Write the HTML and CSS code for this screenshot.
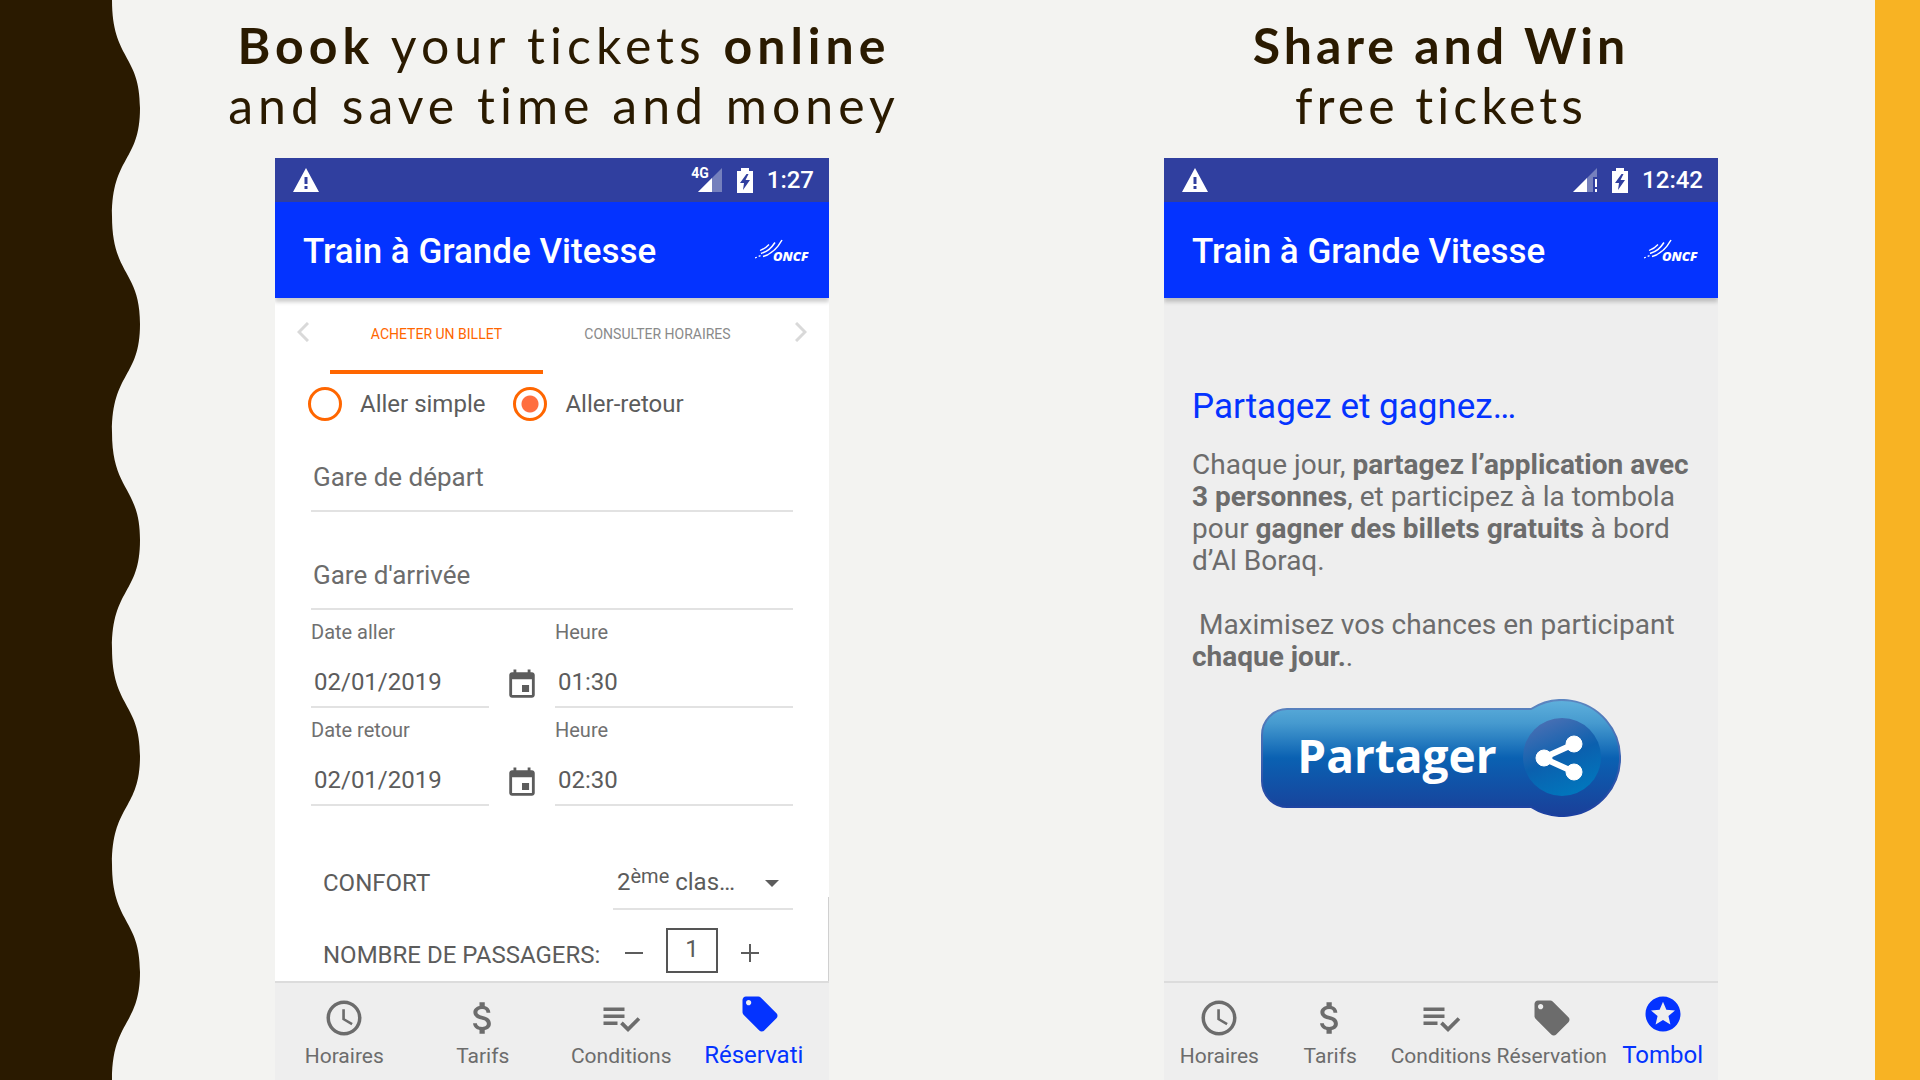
FILE: index.html
```html
<!DOCTYPE html>
<html lang="en">
<head>
    <meta charset="UTF-8">
    <meta name="viewport" content="width=device-width, initial-scale=1.0">
    <title>Train à Grande Vitesse</title>
    <link rel="stylesheet" href="styles.css">
</head>
<body>
    <!-- Shared icons -->
    <svg class="sprite" aria-hidden="true">
        <symbol id="warning" viewBox="0 0 26 24"><path fill="#fff" fill-rule="evenodd" d="M13 0L26 24H0zM11.500 9v7h3V9zM11.500 18v3h3v-3z"/></symbol>
        <symbol id="battery" viewBox="0 0 16 25"><path fill="#fff" fill-rule="evenodd" d="M4 0h8v3h4v22H0V3h4zM9.500 6L3 15h4l-1 7 7-10H8.500l3-6z"/></symbol>
        <symbol id="clock" viewBox="0 0 24 24"><path d="M11.990 2C6.470 2 2 6.480 2 12s4.470 10 9.990 10C17.520 22 22 17.520 22 12S17.520 2 11.990 2zM12 20a8 8 0 1 1 0-16 8 8 0 0 1 0 16zM12.500 7H11v6l5.250 3.150.750-1.230-4.500-2.670z"/></symbol>
        <symbol id="dollar" viewBox="0 0 24 24"><path d="M11.800 10.900c-2.270-.590-3-1.200-3-2.150 0-1.090 1.010-1.850 2.700-1.850 1.780 0 2.440.850 2.500 2.100h2.210c-.070-1.720-1.120-3.300-3.210-3.810V3h-3v2.160c-1.940.420-3.500 1.680-3.500 3.610 0 2.310 1.910 3.460 4.700 4.130 2.500.600 3 1.480 3 2.410 0 .690-.490 1.790-2.700 1.790-2.060 0-2.870-.920-2.980-2.100h-2.200c.120 2.190 1.760 3.420 3.680 3.830V21h3v-2.150c1.950-.370 3.500-1.500 3.500-3.550 0-2.840-2.430-3.810-4.700-4.400z"/></symbol>
        <symbol id="list" viewBox="0 0 24 24"><path d="M14 6H2v2h12zM14 10H2v2h12zM2 16h8v-2H2zM21.500 11.500L23 13l-6.990 7-4.510-4.500L13 14l3.010 3z"/></symbol>
        <symbol id="tag" viewBox="0 0 24 24"><path d="M21.410 11.580l-9-9C12.050 2.220 11.550 2 11 2H4c-1.100 0-2 .900-2 2v7c0 .550.220 1.050.590 1.420l9 9c.360.360.860.580 1.410.580s1.050-.220 1.410-.590l7-7c.370-.360.590-.860.590-1.410s-.230-1.060-.590-1.420zM5.500 7C4.670 7 4 6.330 4 5.500S4.670 4 5.500 4 7 4.670 7 5.500 6.330 7 5.500 7z"/></symbol>
        <symbol id="star" viewBox="0 0 24 24"><path d="M11.990 2C6.470 2 2 6.480 2 12s4.470 10 9.990 10C17.520 22 22 17.520 22 12S17.520 2 11.990 2zm4.240 16L12 15.450 7.770 18l1.120-4.810-3.730-3.230 4.920-.420L12 5l1.920 4.530 4.920.420-3.730 3.230L16.230 18z"/></symbol>
        <symbol id="event" viewBox="0 0 24 24"><path d="M17 12h-5v5h5v-5zM16 1v2H8V1H6v2H5c-1.110 0-1.990.900-1.990 2L3 19c0 1.100.890 2 2 2h14c1.100 0 2-.900 2-2V5c0-1.100-.900-2-2-2h-1V1h-2zm3 18H5V8h14v11z"/></symbol>
        <symbol id="oncf" viewBox="0 0 54 24">
            <g fill="none" stroke="#fff">
                <path stroke-width="1.500" d="M27 1C22 10 17 15 8 17.500"/>
                <path stroke-width="1.500" d="M20 3.500C16 9.500 13 12 6 14.500"/>
                <path stroke-width="1.300" d="M14 5.500C11 9 9 10 5 11.500"/>
                <path stroke-width="1.200" stroke-dasharray="2 2" d="M0 19l7-3"/>
            </g>
            <text x="18" y="22" fill="#fff" font-family="Open Sans, sans-serif" font-size="13" font-weight="800" font-style="italic">ONCF</text>
        </symbol>
    </svg>

    <svg class="wave" viewBox="0 0 140 1080" preserveAspectRatio="none" aria-hidden="true">
        <path fill="#2a1a00" d="M0 0H112C112 60 140 54 140 108S112 156 112 216 140 270 140 324 112 372 112 432 140 486 140 540 112 588 112 648 140 702 140 756 112 804 112 864 140 918 140 972 112 1020 112 1080H0z"/>
    </svg>

    <main class="slide">
        <section class="panel panel-book">
            <h1 class="headline"><b>Book</b> your tickets <b>online</b><br>and save time and money</h1>

            <div class="phone phone-white">
                <div class="status">
                    <svg class="icon-warning"><use href="#warning"/></svg>
                    <span class="network">4G</span>
                    <svg class="icon-signal" viewBox="0 0 24 24"><path fill="#7580bd" d="M24 0v24H0z"/><path fill="#fff" d="M14 10v14H0z"/></svg>
                    <svg class="icon-battery"><use href="#battery"/></svg>
                    <span class="time">1:27</span>
                </div>
                <header class="appbar">
                    <h2>Train à Grande Vitesse</h2>
                    <svg class="logo"><use href="#oncf"/></svg>
                </header>

                <div class="tabs">
                    <button class="arrow" aria-label="Précédent"><svg viewBox="0 0 12 20"><path d="M11 1L2 10l9 9"/></svg></button>
                    <button class="tab tab-active">ACHETER UN BILLET</button>
                    <button class="tab">CONSULTER HORAIRES</button>
                    <button class="arrow" aria-label="Suivant"><svg viewBox="0 0 12 20"><path d="M1 1l9 9-9 9"/></svg></button>
                </div>

                <form class="booking">
                    <div class="trip">
                        <label><input type="radio" name="trip"> Aller simple</label>
                        <label><input type="radio" name="trip" checked> Aller-retour</label>
                    </div>

                    <input class="station" type="text" aria-label="Gare de départ" placeholder="Gare de départ">
                    <input class="station" type="text" aria-label="Gare d'arrivée" placeholder="Gare d'arrivée">

                    <div class="dates">
                        <label for="dateAller">Date aller</label>
                        <label class="hour" for="heureAller">Heure</label>
                        <input type="text" id="dateAller" value="02/01/2019">
                        <button type="button" aria-label="Calendrier"><svg><use href="#event"/></svg></button>
                        <input type="text" id="heureAller" value="01:30">
                    </div>
                    <div class="dates">
                        <label for="dateRetour">Date retour</label>
                        <label class="hour" for="heureRetour">Heure</label>
                        <input type="text" id="dateRetour" value="02/01/2019">
                        <button type="button" aria-label="Calendrier"><svg><use href="#event"/></svg></button>
                        <input type="text" id="heureRetour" value="02:30">
                    </div>

                    <div class="comfort">
                        <label for="confort">CONFORT</label>
                        <div class="select">
                            <select id="confort"><option>2ème classe</option><option>1ère classe</option></select>
                            <span class="select-text" aria-hidden="true">2<sup>ème</sup> clas…</span>
                        </div>
                    </div>

                    <div class="passengers">
                        <label for="passagers">NOMBRE DE PASSAGERS:</label>
                        <button type="button" aria-label="Moins"><svg viewBox="0 0 18 18"><path d="M0 9h18"/></svg></button>
                        <input type="text" id="passagers" value="1">
                        <button type="button" aria-label="Plus"><svg viewBox="0 0 18 18"><path d="M0 9h18M9 0v18"/></svg></button>
                    </div>
                </form>

                <div class="scrollbar"></div>

                <nav class="bottom">
                    <a href="#"><svg><use href="#clock"/></svg><span>Horaires</span></a>
                    <a href="#"><svg><use href="#dollar"/></svg><span>Tarifs</span></a>
                    <a href="#"><svg><use href="#list"/></svg><span>Conditions</span></a>
                    <a class="active" href="#"><svg><use href="#tag"/></svg><span>Réservati</span></a>
                </nav>
            </div>
        </section>

        <section class="panel">
            <h1 class="headline"><b>Share and Win</b><br>free tickets</h1>

            <div class="phone">
                <div class="status">
                    <svg class="icon-warning"><use href="#warning"/></svg>
                    <svg class="icon-signal" viewBox="0 0 24 24"><path fill="#7580bd" d="M24 0v9h-4v15H0z"/><path fill="#fff" d="M14 10v14H0zM22 11h2v8h-2zM22 21h2v3h-2z"/></svg>
                    <svg class="icon-battery"><use href="#battery"/></svg>
                    <span class="time">12:42</span>
                </div>
                <header class="appbar">
                    <h2>Train à Grande Vitesse</h2>
                    <svg class="logo"><use href="#oncf"/></svg>
                </header>

                <div class="lottery">
                    <h3>Partagez et gagnez…</h3>
                    <p>Chaque jour, <b>partagez l’application avec 3 personnes</b>, et participez à la tombola pour <b>gagner des billets gratuits</b> à bord d’Al Boraq.</p>
                    <p>&nbsp;Maximisez vos chances en participant <b>chaque jour.</b>.</p>
                    <button class="share">
                        <svg viewBox="0 0 360 118" aria-hidden="true">
                            <defs>
                                <linearGradient id="pill" x1="0" y1="0" x2="0" y2="1">
                                    <stop offset="0" stop-color="#5fb0dc"/>
                                    <stop offset=".200" stop-color="#469acf"/>
                                    <stop offset=".500" stop-color="#0a61b2"/>
                                    <stop offset="1" stop-color="#1a3f99"/>
                                </linearGradient>
                                <linearGradient id="pillEdge" x1="0" y1="0" x2="0" y2="1">
                                    <stop offset="0" stop-color="#5c86c0"/>
                                    <stop offset="1" stop-color="#1a3fa0"/>
                                </linearGradient>
                                <linearGradient id="knob" x1=".300" y1="0" x2=".700" y2="1">
                                    <stop offset="0" stop-color="#4a70b4"/>
                                    <stop offset=".500" stop-color="#0b60ae"/>
                                    <stop offset="1" stop-color="#0078be"/>
                                </linearGradient>
                            </defs>
                            <path fill="url(#pill)" stroke="url(#pillEdge)" stroke-width="2" d="M26 10H270A58 58 0 1 1 270 108H26C12 108 1 96 1 82V36C1 22 12 10 26 10z"/>
                            <circle cx="301" cy="58" r="39" fill="url(#knob)"/>
                            <g fill="#fff" stroke="#fff">
                                <path fill="none" stroke-width="6" d="M313 45l-31 14 31 14"/>
                                <circle cx="283" cy="59" r="8"/>
                                <circle cx="313" cy="45" r="8"/>
                                <circle cx="313" cy="73" r="8"/>
                            </g>
                        </svg>
                        <span>Partager</span>
                    </button>
                </div>

                <nav class="bottom">
                    <a href="#"><svg><use href="#clock"/></svg><span>Horaires</span></a>
                    <a href="#"><svg><use href="#dollar"/></svg><span>Tarifs</span></a>
                    <a href="#"><svg><use href="#list"/></svg><span>Conditions</span></a>
                    <a href="#"><svg><use href="#tag"/></svg><span>Réservation</span></a>
                    <a class="active" href="#"><svg><use href="#star"/></svg><span>Tombol</span></a>
                </nav>
            </div>
        </section>
    </main>
</body>
</html>
```
FILE: styles.css
```css
* {
    box-sizing: border-box;
}

body {
    margin: 0;
    min-height: 100vh;
    display: flex;
    background: #f3f3f1;
    border-right: 45px solid #f8b323;
    font-family: Roboto, 'Liberation Sans', sans-serif;
    color: #5c5c5c;
}

button, input, select {
    font: inherit;
    color: inherit;
    background: none;
    border: none;
    padding: 0;
    margin: 0;
}

button {
    cursor: pointer;
}

svg {
    display: block;
}

.sprite {
    display: none;
}

.wave {
    width: 140px;
    height: 100vh;
    flex: none;
}

.slide {
    flex: 1;
    display: grid;
    grid-template-columns: 1fr 1fr;
    gap: 169px;
    padding: 0 74px 0 52px;
}

.panel {
    display: flex;
    flex-direction: column;
    align-items: center;
}

.headline {
    margin: 0;
    padding: 15px 0 23px;
    font-family: Lato, sans-serif;
    font-size: 50px;
    line-height: 60px;
    font-weight: 400;
    letter-spacing: 4px;
    text-align: center;
    white-space: nowrap;
    color: #2a1a00;
}

.panel-book .headline {
    padding-left: 24px;
    letter-spacing: 5px;
}

/* Phone */
.phone {
    position: relative;
    flex: 1;
    width: 100%;
    max-width: 554px;
    display: flex;
    flex-direction: column;
    background: #eee;
}

.phone-white {
    background: #fff;
}

.status {
    height: 44px;
    padding: 0 15px 0 18px;
    display: flex;
    align-items: center;
    background: #303f9f;
    color: #fff;
}

.icon-warning {
    width: 26px;
    height: 24px;
    margin-right: auto;
}

.icon-signal {
    width: 24px;
    height: 24px;
    margin-right: 15px;
}

.icon-battery {
    width: 16px;
    height: 25px;
    margin-right: 14px;
}

.network {
    align-self: flex-start;
    padding-top: 7px;
    margin-right: -11px;
    font-size: 14px;
    line-height: 16px;
    font-weight: 700;
}

.time {
    font-size: 24px;
    font-weight: 500;
}

.appbar {
    height: 96px;
    padding: 2px 20px 0 28px;
    display: flex;
    align-items: center;
    justify-content: space-between;
    background: #0433ff;
    color: #fff;
    box-shadow: 0 4px 4px rgba(0, 0, 0, 0.2);
    clip-path: inset(0 0 -8px 0);
    z-index: 1;
}

.appbar h2 {
    margin: 0;
    font-size: 35px;
    font-weight: 500;
}

.logo {
    width: 54px;
    height: 24px;
}

/* Booking screen */
.tabs {
    display: grid;
    grid-template-columns: 55px 213px 1fr 57px;
    height: 76px;
    font-size: 14px;
    color: #8a8a8a;
}

.arrow {
    display: flex;
    align-items: center;
    justify-content: center;
    padding-bottom: 8px;
}

.arrow svg {
    width: 12px;
    height: 20px;
    fill: none;
    stroke: #d9d9d9;
    stroke-width: 3px;
}

.tab {
    border-bottom: 4px solid transparent;
}

.tab-active {
    color: #ff6600;
    border-color: #ff6600;
}

.booking {
    flex: 1;
    padding: 0 36px;
    font-size: 24px;
}

.trip {
    display: flex;
    align-items: center;
    gap: 28px;
    height: 62px;
    padding-bottom: 2px;
    margin-left: -3px;
}

.trip label {
    display: flex;
    align-items: center;
    gap: 18px;
}

.trip input {
    appearance: none;
    width: 34px;
    height: 34px;
    border: 3px solid #ff6600;
    border-radius: 50%;
}

.trip input:checked {
    background: radial-gradient(circle, #ff6e40 8px, transparent 9px);
}

.station {
    display: block;
    width: 100%;
    height: 68px;
    margin-top: 8px;
    padding-left: 2px;
    border-bottom: 2px solid #e2e2e2;
    font-size: 26px;
}

.station + .station {
    margin-top: 30px;
}

.station::placeholder {
    color: #6c6c6c;
}

.dates {
    display: grid;
    grid-template-columns: 178px 66px 1fr;
    row-gap: 14px;
    padding-top: 10px;
}

.dates label {
    font-size: 20px;
    line-height: 24px;
    color: #707070;
}

.dates .hour {
    grid-column: 3;
}

.dates input {
    width: 100%;
    height: 50px;
    padding-left: 3px;
    border-bottom: 2px solid #e2e2e2;
}

.dates button {
    display: flex;
    align-items: center;
    justify-content: center;
    padding-top: 4px;
}

.dates svg {
    width: 34px;
    height: 34px;
    fill: #5c5c5c;
}

.comfort {
    display: flex;
    align-items: center;
    justify-content: space-between;
    margin-top: 50px;
    padding-left: 12px;
}

.select {
    position: relative;
    width: 180px;
}

.select select {
    appearance: none;
    display: block;
    width: 100%;
    height: 54px;
    border-bottom: 2px solid #e2e2e2;
    color: transparent;
}

.select::after {
    content: "";
    position: absolute;
    top: 24px;
    right: 14px;
    border: 7px solid transparent;
    border-top-color: #5c5c5c;
    border-bottom: none;
}

.select-text {
    position: absolute;
    left: 4px;
    top: 0;
    line-height: 52px;
    pointer-events: none;
}

.select-text sup {
    font-size: 20px;
    line-height: 0;
    vertical-align: 7px;
}

.passengers {
    display: flex;
    align-items: flex-end;
    margin-top: 18px;
    padding-left: 12px;
}

.passengers label {
    line-height: 36px;
    white-space: nowrap;
    margin-right: auto;
}

.passengers button {
    width: 64px;
    height: 40px;
    display: flex;
    align-items: center;
    justify-content: center;
}

.passengers button:first-of-type {
    width: 44px;
    margin-right: 10px;
}

.passengers button:last-of-type {
    margin-right: 11px;
}

.passengers svg {
    width: 18px;
    height: 18px;
    fill: none;
    stroke: #5c5c5c;
    stroke-width: 2px;
}

.passengers input {
    width: 52px;
    height: 45px;
    padding-bottom: 4px;
    border: 2px solid #555;
    text-align: center;
}

.scrollbar {
    position: absolute;
    right: 0;
    bottom: 99px;
    width: 1px;
    height: 84px;
    background: #d0d0d0;
}

/* Share screen */
.lottery {
    flex: 1;
    padding: 85px 28px 0;
    font-size: 28px;
    line-height: 32px;
    color: #6c6c6c;
}

.lottery h3 {
    margin: 0 0 18px;
    font-size: 35px;
    line-height: 48px;
    font-weight: 400;
    color: #0433ff;
}

.lottery p {
    margin: 0 0 32px;
}

.share {
    position: relative;
    display: block;
    width: 360px;
    height: 118px;
    margin: -6px auto 0;
    padding: 0 88px 6px 0;
    color: #fff;
    font-family: 'Open Sans', sans-serif;
    font-size: 46px;
    font-weight: 700;
}

.share svg {
    position: absolute;
    left: 0;
    top: 0;
    width: 360px;
    height: 118px;
}

.share span {
    position: relative;
}

/* Bottom navigation */
.bottom {
    display: flex;
    height: 99px;
    background: #eee;
    border-top: 2px solid #dcdcdc;
}

.bottom a {
    flex: 1 1 0;
    min-width: 0;
    padding-top: 14px;
    display: flex;
    flex-direction: column;
    align-items: center;
    gap: 3px;
    color: #6c6c6c;
    font-size: 21px;
    line-height: 28px;
    text-decoration: none;
}

.bottom svg {
    width: 42px;
    height: 42px;
    fill: currentColor;
}

.bottom .active {
    padding-top: 10px;
    gap: 6px;
    color: #0433ff;
    font-size: 24px;
}

.phone-white .active span {
    padding-right: 12px;
}
```
